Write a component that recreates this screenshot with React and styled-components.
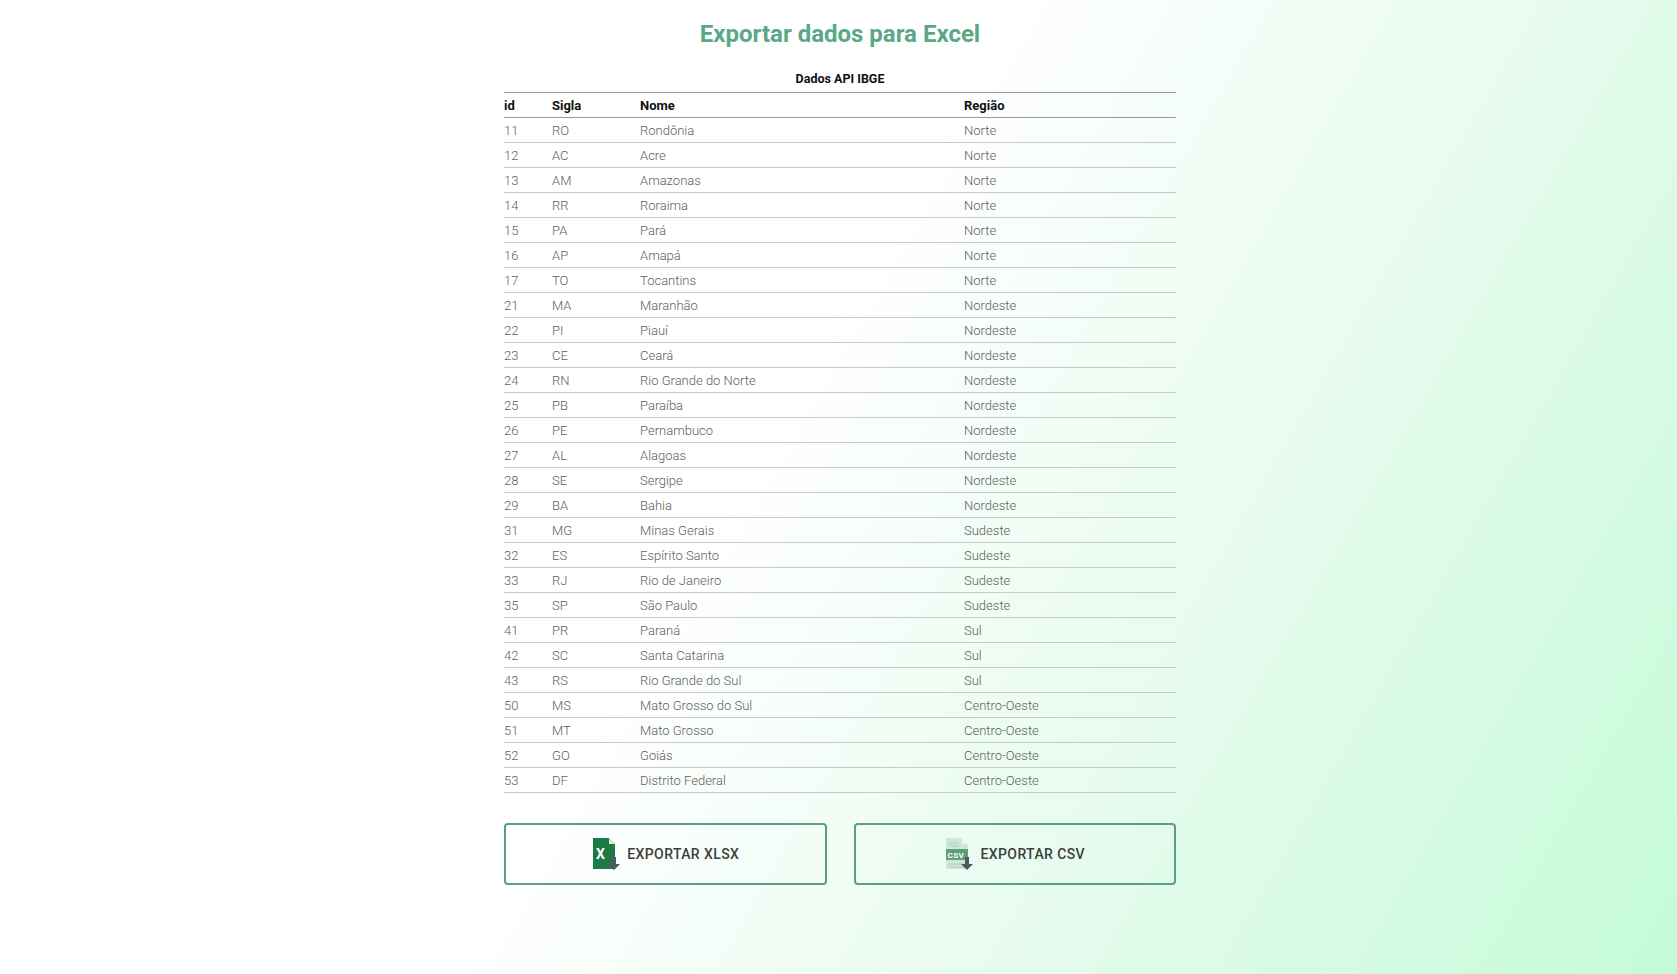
import React from "react";
import styled, { createGlobalStyle } from "styled-components";

const Global = createGlobalStyle`
  html, body { margin: 0; padding: 0; }
  body {
    min-height: 974px;
    font-family: Roboto, "Liberation Sans", sans-serif;
    background: linear-gradient(120deg, #ffffff 0%, #ffffff 45%, #e6fbee 70%, #c4fbd8 100%);
  }
`;

const Page = styled.div`
  width: 672px;
  margin: 0 auto;
  padding-top: 19px;
  padding-left: 3px;
  display: flex;
  flex-direction: column;
  align-items: stretch;
`;
const Title = styled.h1`
  margin: 0 0 22px;
  text-align: center;
  font-size: 24px;
  font-weight: 700;
  color: #5aa886;
  line-height: 30px;
`;
const Table = styled.table`
  width: 100%;
  border-collapse: collapse;
  font-size: 13px;
`;
const Caption = styled.caption`
  font-weight: 700;
  font-size: 12.5px;
  color: #111;
  padding-bottom: 6px;
`;
const Th = styled.th`
  text-align: left;
  font-weight: 700;
  color: #111;
  height: 24px;
  padding: 0;
  border-top: 1px solid #999;
  border-bottom: 1px solid #999;
  width: ${p => p.$w || "auto"};
`;
const Td = styled.td`
  height: 24px;
  padding: 0;
  color: #606060;
  font-weight: 300;
  border-bottom: 1px solid #c8c8c8;
`;
const Buttons = styled.div`
  display: flex;
  gap: 27px;
  margin-top: 30px;
`;
const Btn = styled.button`
  flex: 1;
  height: 62px;
  background: transparent;
  border: 2px solid #5a9e84;
  border-radius: 4px;
  display: flex;
  align-items: center;
  justify-content: center;
  gap: 6px;
  font-family: Roboto, "Liberation Sans", sans-serif;
  font-size: 14px;
  font-weight: 500;
  letter-spacing: 0.4px;
  color: #3e3e3e;
  cursor: pointer;
`;

const data = [
[11,"RO","Rondônia","Norte"],[12,"AC","Acre","Norte"],[13,"AM","Amazonas","Norte"],[14,"RR","Roraima","Norte"],[15,"PA","Pará","Norte"],[16,"AP","Amapá","Norte"],[17,"TO","Tocantins","Norte"],
[21,"MA","Maranhão","Nordeste"],[22,"PI","Piauí","Nordeste"],[23,"CE","Ceará","Nordeste"],[24,"RN","Rio Grande do Norte","Nordeste"],[25,"PB","Paraíba","Nordeste"],[26,"PE","Pernambuco","Nordeste"],[27,"AL","Alagoas","Nordeste"],[28,"SE","Sergipe","Nordeste"],[29,"BA","Bahia","Nordeste"],
[31,"MG","Minas Gerais","Sudeste"],[32,"ES","Espírito Santo","Sudeste"],[33,"RJ","Rio de Janeiro","Sudeste"],[35,"SP","São Paulo","Sudeste"],
[41,"PR","Paraná","Sul"],[42,"SC","Santa Catarina","Sul"],[43,"RS","Rio Grande do Sul","Sul"],
[50,"MS","Mato Grosso do Sul","Centro-Oeste"],[51,"MT","Mato Grosso","Centro-Oeste"],[52,"GO","Goiás","Centro-Oeste"],[53,"DF","Distrito Federal","Centro-Oeste"]];

const XlsxIcon = () => (
  <svg width="30" height="34" viewBox="0 0 30 34">
    <path d="M2 1h16l6 6v25H2z" fill="#1e7a45"/>
    <path d="M18 1v6h6z" fill="#d9efe1"/>
    <text x="5" y="22" fill="#fff" fontSize="14" fontWeight="700" fontFamily="Roboto, sans-serif">X</text>
    <path d="M21 20v7h-4l6 6 6-6h-4v-7z" fill="#4b5a62"/>
  </svg>
);
const CsvIcon = () => (
  <svg width="30" height="34" viewBox="0 0 30 34">
    <path d="M2 1h16l6 6v25H2z" fill="#cfe8d5"/>
    <path d="M18 1v6h6z" fill="#eef7f0"/>
    <g stroke="#a9cdb2" strokeWidth="1">
      <path d="M5 6h10M5 9h10M5 27h16M5 30h16"/>
    </g>
    <rect x="2" y="12" width="22" height="11" fill="#5f9e78"/>
    <text x="3.5" y="21" fill="#fff" fontSize="8" fontWeight="700" fontFamily="Roboto, sans-serif">CSV</text>
    <path d="M21 20v7h-4l6 6 6-6h-4v-7z" fill="#4b5a62"/>
  </svg>
);

export default function App() {
  return (
    <>
      <Global />
      <Page>
        <Title>Exportar dados para Excel</Title>
        <Table>
          <Caption>Dados API IBGE</Caption>
          <thead>
            <tr><Th $w="48px">id</Th><Th $w="88px">Sigla</Th><Th $w="324px">Nome</Th><Th>Região</Th></tr>
          </thead>
          <tbody>
            {data.map(r => (
              <tr key={r[0]}>{r.map((c, i) => <Td key={i}>{c}</Td>)}</tr>
            ))}
          </tbody>
        </Table>
        <Buttons>
          <Btn><XlsxIcon />EXPORTAR XLSX</Btn>
          <Btn><CsvIcon />EXPORTAR CSV</Btn>
        </Buttons>
      </Page>
    </>
  );
}
